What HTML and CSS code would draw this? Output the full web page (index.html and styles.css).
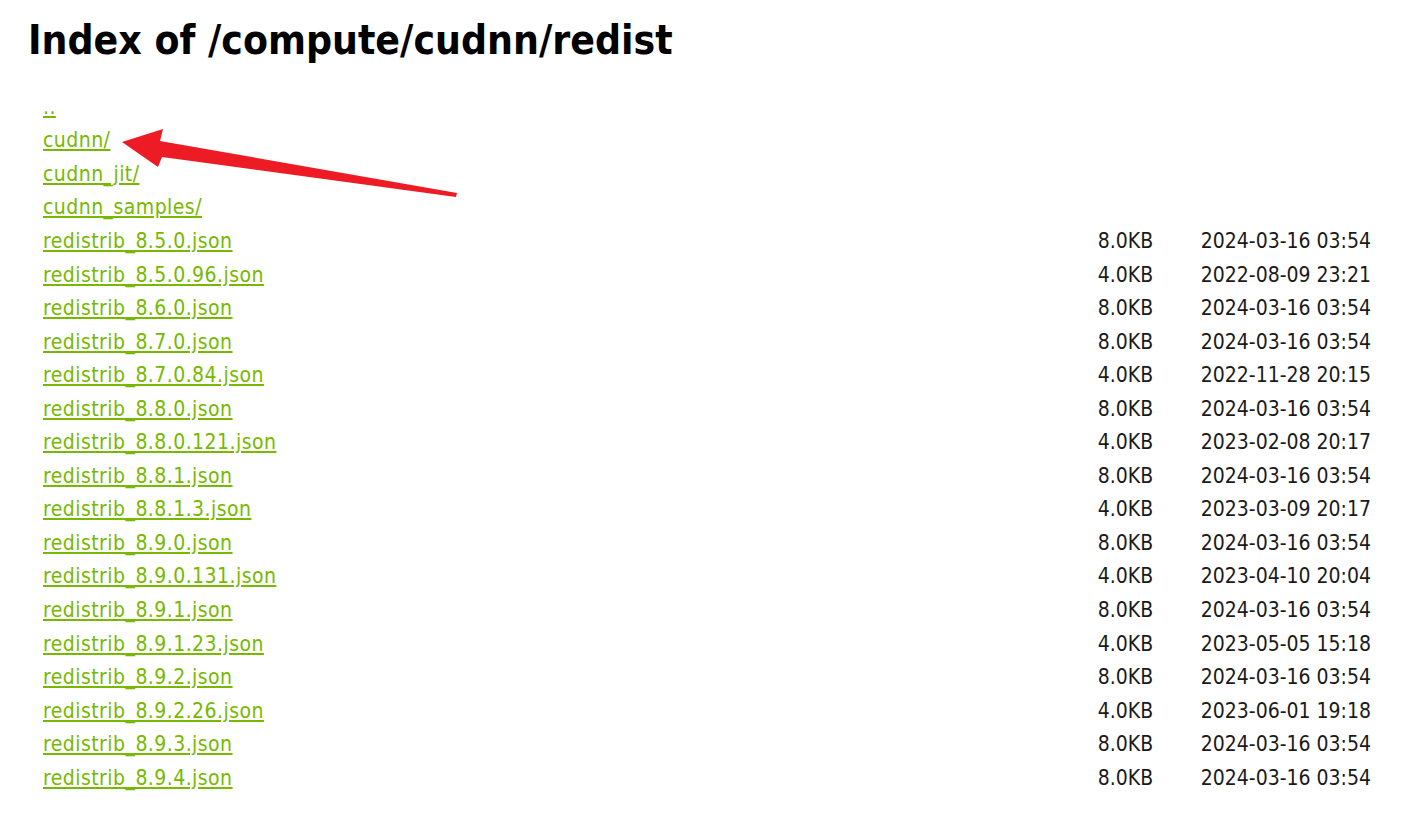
FILE: index.html
```html
<!DOCTYPE html>
<html>
<head>
<meta charset="utf-8">
<title>Index of /compute/cudnn/redist</title>
<link rel="stylesheet" href="styles.css">
</head>
<body>
<h1 class="title">Index of /compute/cudnn/redist</h1>
<table class="listing">
<tr><td class="name"><a href="#">..</a></td><td class="size"></td><td class="date"></td></tr>
<tr><td class="name"><a href="#">cudnn/</a></td><td class="size"></td><td class="date"></td></tr>
<tr><td class="name"><a href="#">cudnn_jit/</a></td><td class="size"></td><td class="date"></td></tr>
<tr><td class="name"><a href="#">cudnn_samples/</a></td><td class="size"></td><td class="date"></td></tr>
<tr><td class="name"><a href="#">redistrib_8.5.0.json</a></td><td class="size">8.0KB</td><td class="date">2024-03-16 03:54</td></tr>
<tr><td class="name"><a href="#">redistrib_8.5.0.96.json</a></td><td class="size">4.0KB</td><td class="date">2022-08-09 23:21</td></tr>
<tr><td class="name"><a href="#">redistrib_8.6.0.json</a></td><td class="size">8.0KB</td><td class="date">2024-03-16 03:54</td></tr>
<tr><td class="name"><a href="#">redistrib_8.7.0.json</a></td><td class="size">8.0KB</td><td class="date">2024-03-16 03:54</td></tr>
<tr><td class="name"><a href="#">redistrib_8.7.0.84.json</a></td><td class="size">4.0KB</td><td class="date">2022-11-28 20:15</td></tr>
<tr><td class="name"><a href="#">redistrib_8.8.0.json</a></td><td class="size">8.0KB</td><td class="date">2024-03-16 03:54</td></tr>
<tr><td class="name"><a href="#">redistrib_8.8.0.121.json</a></td><td class="size">4.0KB</td><td class="date">2023-02-08 20:17</td></tr>
<tr><td class="name"><a href="#">redistrib_8.8.1.json</a></td><td class="size">8.0KB</td><td class="date">2024-03-16 03:54</td></tr>
<tr><td class="name"><a href="#">redistrib_8.8.1.3.json</a></td><td class="size">4.0KB</td><td class="date">2023-03-09 20:17</td></tr>
<tr><td class="name"><a href="#">redistrib_8.9.0.json</a></td><td class="size">8.0KB</td><td class="date">2024-03-16 03:54</td></tr>
<tr><td class="name"><a href="#">redistrib_8.9.0.131.json</a></td><td class="size">4.0KB</td><td class="date">2023-04-10 20:04</td></tr>
<tr><td class="name"><a href="#">redistrib_8.9.1.json</a></td><td class="size">8.0KB</td><td class="date">2024-03-16 03:54</td></tr>
<tr><td class="name"><a href="#">redistrib_8.9.1.23.json</a></td><td class="size">4.0KB</td><td class="date">2023-05-05 15:18</td></tr>
<tr><td class="name"><a href="#">redistrib_8.9.2.json</a></td><td class="size">8.0KB</td><td class="date">2024-03-16 03:54</td></tr>
<tr><td class="name"><a href="#">redistrib_8.9.2.26.json</a></td><td class="size">4.0KB</td><td class="date">2023-06-01 19:18</td></tr>
<tr><td class="name"><a href="#">redistrib_8.9.3.json</a></td><td class="size">8.0KB</td><td class="date">2024-03-16 03:54</td></tr>
<tr><td class="name"><a href="#">redistrib_8.9.4.json</a></td><td class="size">8.0KB</td><td class="date">2024-03-16 03:54</td></tr>
</table>
<svg class="arrow" width="1428" height="838" viewBox="0 0 1428 838">
<polygon fill="#ed1c24" points="122,142 163,129 160,141 457,193 456,197 162,157 158,167"/>
</svg>
</body>
</html>
```
FILE: styles.css
```css
html, body {
  margin: 0;
  padding: 0;
  background: #ffffff;
}
body {
  font-family: "DejaVu Sans Condensed", "DejaVu Sans", sans-serif;
  color: #1a1a1a;
  padding: 14px 0 0 28px;
}
.title {
  margin: 0 0 24px 0;
  font-size: 40.5px;
  font-weight: bold;
  color: #000;
  line-height: 52px;
}
.listing {
  border-collapse: collapse;
  width: 1343px;
  font-size: 21px;
}
.listing td {
  height: 33.55px;
  padding: 0;
  vertical-align: middle;
}
.name {
  padding-left: 15px !important;
}
.name a {
  color: #76b900;
  text-decoration: underline;
  letter-spacing: 0.45px;
}
.size {
  width: 103px;
}
.date {
  width: 170px;
  text-align: right;
  white-space: nowrap;
}
.arrow {
  position: absolute;
  left: 0;
  top: 0;
  pointer-events: none;
}
```
